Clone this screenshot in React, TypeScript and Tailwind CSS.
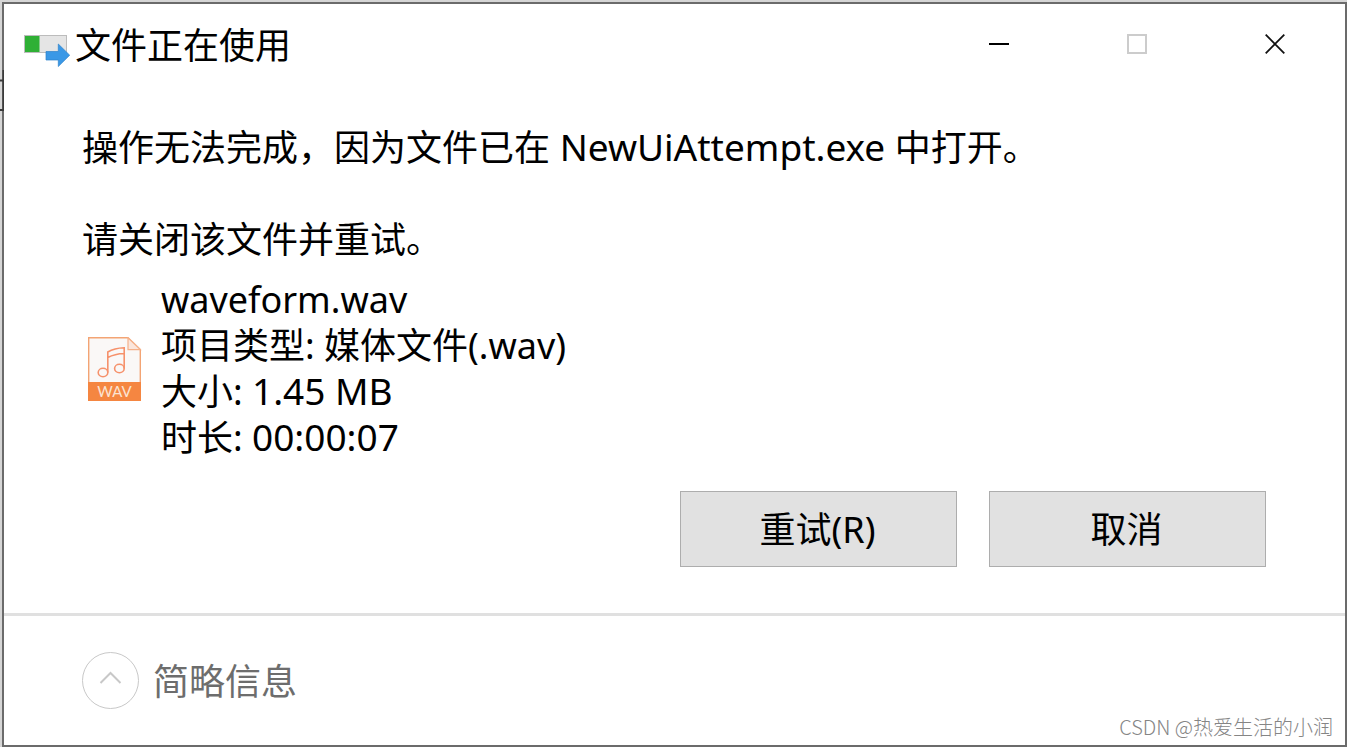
function TransferIcon() {
  return (
    <svg className="h-9 w-12 shrink-0" viewBox="0 0 48 36" aria-hidden="true">
      <rect x="0.5" y="3.5" width="42" height="17" fill="#e5e5e5" stroke="#bcbcbc" />
      <rect x="1" y="4" width="14.500" height="16" fill="#2fb035" />
      <path d="M22 19.500H34.300V12L45.700 23.200L34.300 34.500V28H22Z" fill="#3a98e6" stroke="#2c82cc" strokeWidth="0.7" />
    </svg>
  );
}

function WavIcon() {
  return (
    <svg className="h-16 w-[54px] shrink-0" viewBox="0 0 54 64" role="img" aria-label="WAV">
      <path d="M0.7 0.7H40L52.3 12.600V63.3H0.7Z" fill="#faf8f7" stroke="#f3a474" strokeWidth="1.400" />
      <path d="M40 0.7V12.6H52.3Z" fill="#fbe6dc" stroke="#f5b18a" strokeWidth="1.2" />
      <rect y="45" width="53" height="19" fill="#f58641" />
      <g fill="none" stroke="#f6926c" strokeWidth="1.6">
        <ellipse cx="15" cy="35.5" rx="4.8" ry="4.2" />
        <ellipse cx="31.4" cy="31.5" rx="4.8" ry="4.2" />
        <path d="M19.8 35.5V15C24 12.5 29.5 11 36.2 10.8V31.5M19.8 20.5C24.500 18 30 16.700 36.200 16.500" />
      </g>
      <text x="26.500" y="60" textAnchor="middle" fontFamily="Lato, sans-serif" fontSize="15" fill="#fbe3d2">
        WAV
      </text>
    </svg>
  );
}

const details = [
  { label: "", value: "waveform.wav" },
  { label: "项目类型: ", value: "媒体文件(.wav)" },
  { label: "大小: ", value: "1.45 MB", large: true },
  { label: "时长: ", value: "00:00:07", large: true },
];

const buttonClass =
  "flex h-[76px] w-[277px] items-center justify-center border border-[#adadad] bg-[#e1e1e1] pt-0.5 pr-0.5";

export default function App() {
  return (
    <div className="flex min-h-screen bg-[#d6d6d6] pt-0.5 pl-0.5 font-['Noto_Sans','Noto_Sans_CJK_SC',sans-serif] text-[36px] leading-[46px] text-black">
      <main className="relative flex flex-1 flex-col border-2 border-[#6b6b6b] bg-white">
        <header className="flex h-20 items-center justify-between pl-5">
          <div className="flex items-center pt-1">
            <div className="pt-2">
              <TransferIcon />
            </div>
            <h1 className="ml-[3px]">文件正在使用</h1>
          </div>
          <div className="flex h-full pr-px">
            <button type="button" aria-label="最小化" className="flex w-[138px] items-center justify-center">
              <svg className="size-5" viewBox="0 0 20 20" aria-hidden="true">
                <path d="M0 10H20" stroke="#000" strokeWidth="2" />
              </svg>
            </button>
            <button type="button" aria-label="最大化" disabled className="flex w-[138px] items-center justify-center">
              <svg className="size-5" viewBox="0 0 20 20" aria-hidden="true">
                <rect x="1" y="1" width="18" height="18" fill="none" stroke="#ccc" strokeWidth="2" />
              </svg>
            </button>
            <button type="button" aria-label="关闭" className="flex w-[138px] items-center justify-center">
              <svg className="size-5" viewBox="0 0 20 20" aria-hidden="true">
                <path d="M0.7 0.7L19.3 19.3M19.3 0.7L0.7 19.3" stroke="#111" strokeWidth="1.8" />
              </svg>
            </button>
          </div>
        </header>

        <section className="flex flex-col px-[78px] pt-[41px] pb-[46px]">
          <p>
            操作无法完成，因为文件已在<span className="text-[37px] leading-none"> NewUiAttempt.exe </span>中打开。
          </p>
          <p className="mt-[46px]">请关闭该文件并重试。</p>
          <div className="mt-3.5 flex items-center gap-[19px] pl-1.5">
            <WavIcon />
            <ul>
              {details.map(({ label, value, large }) => (
                <li key={value}>
                  {label}
                  <span className={large ? "text-[37px] leading-none" : undefined}>{value}</span>
                </li>
              ))}
            </ul>
          </div>
          <div className="mt-[30px] mr-px flex justify-end gap-8">
            <button type="button" className={buttonClass}>重试(R)</button>
            <button type="button" className={buttonClass}>取消</button>
          </div>
        </section>

        <footer className="flex flex-1 items-center border-t-[3px] border-[#e0e0e0] px-[78px]">
          <button type="button" className="flex items-center gap-3.5 text-[#6d6d6d]">
            <svg className="size-[57px]" viewBox="0 0 57 57" fill="none" stroke="#c8c8c8" aria-hidden="true">
              <circle cx="28.5" cy="28.5" r="28" />
              <path d="M18.500 31L28.500 21L38.500 31" strokeWidth="2" />
            </svg>
            <span className="pt-0.5">简略信息</span>
          </button>
        </footer>

        <span className="absolute right-3 bottom-0.5 font-['Noto_Sans_CJK_SC',sans-serif] text-[20px] leading-8 font-light text-[#858585]">
          CSDN @热爱生活的小润
        </span>
      </main>
      <svg className="absolute top-[68px] left-0 h-11 w-1" viewBox="0 0 4 44" aria-hidden="true">
        <path d="M0 12.500H3M0 42H3M3.500 2V43" fill="none" stroke="#3a3a3a" strokeWidth="2" />
      </svg>
    </div>
  );
}
